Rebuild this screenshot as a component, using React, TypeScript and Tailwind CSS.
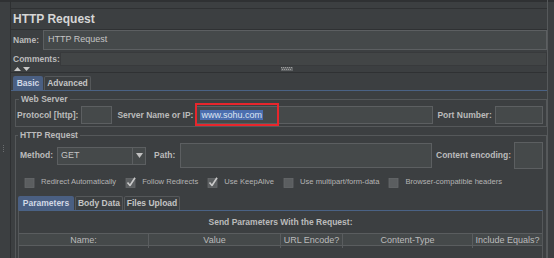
import React from 'react'

const field = 'bg-[#45494a] border border-[#5c5f61]'

const CheckBox: React.FC<{ checked?: boolean; label: string }> = ({ checked, label }) => (
  <div className="flex items-center gap-[6px]">
    <svg width="11" height="11" viewBox="0 0 11 11" className="shrink-0">
      <rect x="1" y="1.5" width="9" height="9" fill="#5b5e60" stroke="#66696b" strokeWidth="0.8" />
      {checked && (
        <path d="M2.5 5.5 L5 8.5 L10 0.8" fill="none" stroke="#c9c9c9" strokeWidth="1.6" strokeLinejoin="round" />
      )}
    </svg>
    <span className="text-[7.6px] leading-none whitespace-nowrap text-[#b4b4b4]">{label}</span>
  </div>
)

const Tab: React.FC<{ active?: boolean; label: string; w: string }> = ({ active, label, w }) => (
  <div
    className={
      active
        ? `${w} h-full flex items-center justify-center bg-[#4a5f82] text-[#d2d9e6] rounded-t-[2px]`
        : `${w} h-full flex items-center justify-center border border-b-0 border-[#55585a] text-[#c4c4c4] rounded-t-[2px]`
    }
  >
    {label}
  </div>
)

export default function App() {
  return (
    <div className="w-[554px] h-[258px] overflow-hidden bg-[#3c3f41] flex font-['Liberation_Sans',Arial,sans-serif] text-[#bbbbbb]">
      {/* left splitter strip */}
      <div className="w-[11px] shrink-0 border-r border-[#2e3032] flex flex-col items-center border-t-2 border-t-[#2f3133]">
        <div className="mt-[143px] ml-[-3px] flex flex-col gap-[1px]">
          <div className="w-[1px] h-[1px] bg-[#6a6d6f]" />
          <div className="w-[1px] h-[1px] bg-[#6a6d6f]" />
          <div className="w-[1px] h-[1px] bg-[#6a6d6f]" />
          <div className="w-[1px] h-[1px] bg-[#6a6d6f]" />
        </div>
      </div>

      {/* main panel */}
      <div className="w-[537px] shrink-0 flex flex-col border-r border-[#56595b]">
        <div className="h-[8px] border-t-2 border-[#2f3133]" />
        <div className="h-[22px] border-t border-b border-[#2f3133] flex items-center pl-[2px] text-[12px] font-bold text-[#d6d6d6]">
          HTTP Request
        </div>

        {/* name */}
        <div className="h-[20px] flex items-stretch">
          <div className="w-[32px] shrink-0 pl-[2px] flex items-center text-[8.5px] font-bold whitespace-nowrap">Name:</div>
          <div className={`${field} flex-1 flex items-center pl-[4px] text-[9px] text-[#c4c4c4]`}>HTTP Request</div>
        </div>

        {/* comments */}
        <div className="mt-[2px] h-[14px] flex items-stretch">
          <div className="shrink-0 pl-[2px] flex items-center text-[8.5px] font-bold whitespace-nowrap">Comments:</div>
          <div className="flex-1 bg-[#424546] border border-[#383a3c]" />
        </div>

        {/* collapse arrows + grip */}
        <div className="h-[7px] flex items-center border-b border-[#2f3133]">
          <svg width="20" height="6" viewBox="0 0 20 6" className="ml-[3px]">
            <path d="M0 5 L3.5 1 L7 5 Z" fill="#c8c8c8" />
            <path d="M9 1 L16 1 L12.5 5 Z" fill="#c8c8c8" />
          </svg>
          <svg width="12" height="4" viewBox="0 0 12 4" className="ml-[247px]">
            <rect x="0" y="0" width="12" height="4" fill="#5f6264" />
            <rect x="0" y="0" width="1" height="1" fill="#9a9a9a" />
            <rect x="2" y="0" width="1" height="1" fill="#9a9a9a" />
            <rect x="4" y="0" width="1" height="1" fill="#9a9a9a" />
            <rect x="6" y="0" width="1" height="1" fill="#9a9a9a" />
            <rect x="8" y="0" width="1" height="1" fill="#9a9a9a" />
            <rect x="10" y="0" width="1" height="1" fill="#9a9a9a" />
            <rect x="1" y="2" width="1" height="1" fill="#9a9a9a" />
            <rect x="3" y="2" width="1" height="1" fill="#9a9a9a" />
            <rect x="5" y="2" width="1" height="1" fill="#9a9a9a" />
            <rect x="7" y="2" width="1" height="1" fill="#9a9a9a" />
            <rect x="9" y="2" width="1" height="1" fill="#9a9a9a" />
          </svg>
        </div>

        {/* basic / advanced tabs */}
        <div className="mt-[3px] h-[14px] flex pl-[2px] gap-[1px] text-[8.5px] font-bold">
          <Tab active label="Basic" w="w-[30px]" />
          <Tab label="Advanced" w="w-[47px]" />
        </div>
        <div className="border-t border-[#4a6285]" />

        {/* web server */}
        <fieldset className="mt-[3px] ml-[4px] border border-[#55585a] pl-[1px] pr-[3px] pb-[1px]">
          <legend className="ml-[2px] px-[2px] text-[8.5px] font-bold leading-[11px]">Web Server</legend>
          <div className="h-[20px] flex items-center text-[8.5px] font-bold whitespace-nowrap">
            <span className="shrink-0">Protocol [http]:</span>
            <div className={`${field} ml-[3px] shrink-0 w-[31px] h-[18px]`} />
            <span className="ml-[5px] shrink-0">Server Name or IP:</span>
            <div className={`${field} ml-[3px] shrink-0 relative w-[237px] h-[18px] flex items-center pl-[3px]`}>
              <span className="bg-[#4b6eaf] text-[#dde5f2] text-[9px] font-normal leading-[10px] px-[1px]">www.sohu.com</span>
              <div className="absolute left-[-2px] top-[-4px] w-[84px] h-[23px] border-2 border-[#e8262c]" />
            </div>
            <span className="ml-[4px] shrink-0">Port Number:</span>
            <div className={`${field} ml-[3px] flex-1 h-[18px]`} />
          </div>
        </fieldset>

        {/* http request */}
        <fieldset className="mt-[3px] ml-[4px] border border-[#55585a] border-b-0 pr-[3px] flex-1 min-h-0">
          <legend className="ml-[2px] px-[2px] text-[8.5px] font-bold leading-[11px]">HTTP Request</legend>
          <div className="h-[29px] flex items-center pl-[4px] text-[8.5px] font-bold whitespace-nowrap">
            <span className="shrink-0 w-[37px]">Method:</span>
            <div className={`${field} shrink-0 w-[89px] h-[18px] flex items-stretch`}>
              <span className="flex-1 flex items-center pl-[3px] text-[9px] font-normal text-[#c4c4c4]">GET</span>
              <span className="w-[13px] border-l border-[#5c5f61] flex items-center justify-center">
                <svg width="7" height="5" viewBox="0 0 7 5">
                  <path d="M0 0 L7 0 L3.5 5 Z" fill="#c0c0c0" />
                </svg>
              </span>
            </div>
            <span className="ml-[8px] shrink-0 w-[26px]">Path:</span>
            <div className={`${field} shrink-0 w-[252px] h-[25px]`} />
            <span className="ml-[4px] shrink-0">Content encoding:</span>
            <div className={`${field} ml-[3px] flex-1 h-[27px]`} />
          </div>

          <div className="h-[24px] flex items-center pl-[8px] gap-[9px]">
            <CheckBox label="Redirect Automatically" />
            <CheckBox checked label="Follow Redirects" />
            <CheckBox checked label="Use KeepAlive" />
            <CheckBox label="Use multipart/form-data" />
            <CheckBox label="Browser-compatible headers" />
          </div>

          {/* parameters tabs */}
          <div className="mt-[2px] pl-[2px]">
            <div className="h-[14px] flex gap-[1px] text-[8.5px] font-bold">
              <Tab active label="Parameters" w="w-[56px]" />
              <Tab label="Body Data" w="w-[48px]" />
              <Tab label="Files Upload" w="w-[56px]" />
            </div>
            <div className="border-t border-[#4a6285] border-l border-r border-l-[#55585a] border-r-[#55585a] h-[60px]">
              <div className="h-[22px] flex items-center justify-center text-[8.5px] font-bold">
                Send Parameters With the Request:
              </div>
              <div className="h-[13px] grid grid-cols-[130px_132px_62px_130px_1fr] bg-[#45494a] border-t border-b border-[#5a5d5f] text-[9px]">
                <div className="flex items-center justify-center border-r border-[#5a5d5f]">Name:</div>
                <div className="flex items-center justify-center border-r border-[#5a5d5f]">Value</div>
                <div className="flex items-center justify-center border-r border-[#5a5d5f]">URL Encode?</div>
                <div className="flex items-center justify-center border-r border-[#5a5d5f]">Content-Type</div>
                <div className="flex items-center justify-center">Include Equals?</div>
              </div>
            </div>
          </div>
        </fieldset>
      </div>

      {/* right strip */}
      <div className="flex-1 border-t-2 border-[#2f3133]" />
    </div>
  )
}
